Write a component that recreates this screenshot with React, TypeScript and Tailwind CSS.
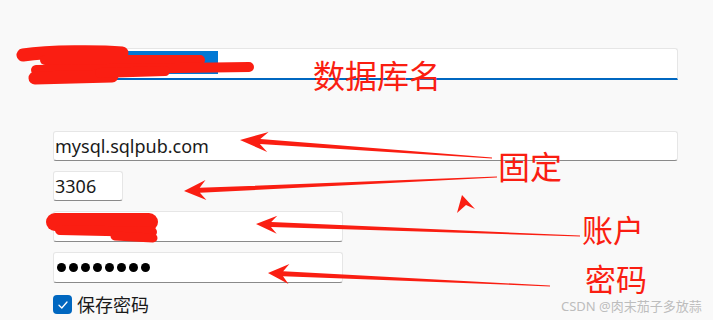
import React from "react";

type Pt = [number, number];

// tapered arrow: thin tail, thick near the head, notched head
function arrowPoints(tail: Pt, tip: Pt, len: number, half: number, shaft: number) {
  const dx = tail[0] - tip[0];
  const dy = tail[1] - tip[1];
  const d = Math.hypot(dx, dy);
  const ux = dx / d;
  const uy = dy / d;
  const nx = -uy;
  const ny = ux;
  const at = (k: number, s: number): Pt => [tip[0] + ux * k + nx * s, tip[1] + uy * k + ny * s];
  const pts: Pt[] = [
    tip,
    at(len, half),
    at(len * 0.72, shaft / 2),
    [tail[0] + nx * 0.4, tail[1] + ny * 0.4],
    [tail[0] - nx * 0.4, tail[1] - ny * 0.4],
    at(len * 0.72, -shaft / 2),
    at(len, -half),
  ];
  return pts.map((p) => p.map((v) => v.toFixed(1)).join(",")).join(" ");
}

const arrows: { tail: Pt; tip: Pt; len: number; half: number; shaft: number }[] = [
  { tail: [492, 158], tip: [240, 140], len: 28, half: 10, shaft: 5 },
  { tail: [497, 177], tip: [184, 191], len: 22, half: 10, shaft: 5 },
  { tail: [580, 236], tip: [256, 224], len: 21, half: 9, shaft: 5 },
  { tail: [550, 286], tip: [268, 273], len: 21, half: 10, shaft: 5 },
];

function Field({ width, height, children }: { width: string; height: string; children?: React.ReactNode }) {
  return (
    <div
      className={`${width} ${height} flex items-center rounded-[3px] border border-[#e6e6e6] border-b-[#8a8a8a] bg-white px-[1px] text-[18px] text-[#1a1a1a]`}
    >
      {children}
    </div>
  );
}

export default function App() {
  return (
    <div
      className="relative h-[320px] w-[713px] overflow-hidden bg-[#f9f9f9]"
      style={{ fontFamily: '"Noto Sans", "Noto Sans CJK SC", sans-serif' }}
    >
      <div className="flex flex-col pl-[53px] pt-[48px]">
        <div className="flex h-[32px] w-[625px] items-start rounded-t-[3px] border border-[#e6e6e6] border-b-2 border-b-[#0067c0] bg-white pl-[1px] pt-[2px]">
          <span className="h-[23px] w-[163px] bg-[#0078d4]" />
        </div>

        <div className="mt-[51px] flex flex-col gap-[10px]">
          <Field width="w-[625px]" height="h-[30px]">
            mysql.sqlpub.com
          </Field>
          <Field width="w-[70px]" height="h-[30px]">
            3306
          </Field>
          <Field width="w-[290px]" height="h-[31px]">
            w
          </Field>
          <Field width="w-[290px]" height="h-[31px]">
            <span className="flex gap-[3px] pl-[2px]">
              {Array.from({ length: 8 }).map((_, i) => (
                <span key={i} className="h-[9px] w-[9px] rounded-full bg-black" />
              ))}
            </span>
          </Field>
        </div>

        <div className="mt-[12px] flex items-center gap-[5px]">
          <span className="flex h-[19px] w-[19px] items-center justify-center rounded-[4px] bg-[#0067c0]">
            <svg width="12" height="12" viewBox="0 0 12 12" fill="none">
              <path d="M2 6.3 L4.8 9 L10 3" stroke="white" strokeWidth="1.3" strokeLinecap="round" strokeLinejoin="round" />
            </svg>
          </span>
          <span className="text-[18px] leading-none text-[#1a1a1a]">保存密码</span>
        </div>
      </div>

      <svg className="pointer-events-none absolute left-0 top-0" width="713" height="320" viewBox="0 0 713 320">
        <g stroke="#fa1e12" strokeLinecap="round" strokeLinejoin="round" fill="none">
          <path d="M23 55 C50 51 100 51 122 53" strokeWidth="13" />
          <path d="M45 60 L200 60" strokeWidth="10" />
          <path d="M36 70 L249 67" strokeWidth="10" />
          <path d="M35 78 L112 76" strokeWidth="13" />
          <path d="M100 73 L165 71" strokeWidth="10" />
          <path d="M55 222 L149 222" strokeWidth="18" />
          <path d="M60 230 L152 232" strokeWidth="10" />
          <path d="M115 236 L153 238" strokeWidth="9" />
        </g>
        <g fill="#fa1e12">
          {arrows.map((a, i) => (
            <polygon key={i} points={arrowPoints(a.tail, a.tip, a.len, a.half, a.shaft)} />
          ))}
          <polygon points="462,195 475,209 466,205 457,213" />
        </g>
      </svg>

      <span className="absolute left-[313px] top-[60px] text-[32px] leading-none text-[#fa1e12]">数据库名</span>
      <span className="absolute left-[498px] top-[151px] text-[32px] leading-none text-[#fa1e12]">固定</span>
      <span className="absolute left-[582px] top-[215px] text-[31px] leading-none text-[#fa1e12]">账户</span>
      <span className="absolute left-[585px] top-[264px] text-[31px] leading-none text-[#fa1e12]">密码</span>
      <span className="absolute left-[561px] top-[300px] text-[13px] leading-none text-[#bdbdbd]">CSDN @肉末茄子多放蒜</span>
    </div>
  );
}
